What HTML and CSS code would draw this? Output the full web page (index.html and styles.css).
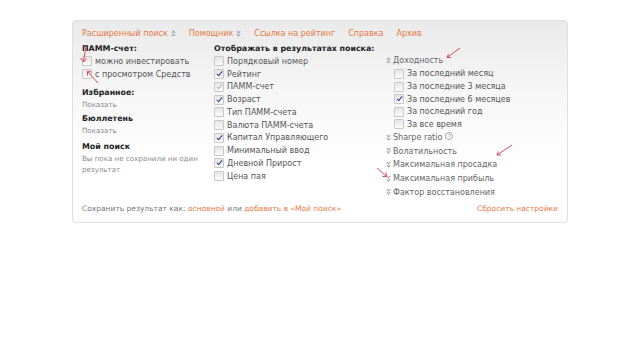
FILE: index.html
```html
<!DOCTYPE html>
<html lang="ru">
<head>
  <meta charset="UTF-8">
  <title>Расширенный поиск</title>
  <link rel="stylesheet" href="styles.css">
</head>
<body>
  <div id="panel">
    <div class="nav">
      <a href="#">Расширенный поиск<span class="chev up"></span></a>
      <a href="#">Помощник<span class="chev"></span></a>
      <a href="#">Ссылка на рейтинг</a>
      <a href="#">Справка</a>
      <a href="#">Архив</a>
    </div>

    <div class="cols">
      <div class="col col-left">
        <h4>ПАММ-счет:</h4>
        <label class="row"><span class="box"></span>можно инвестировать</label>
        <label class="row"><span class="box"></span>с просмотром Средств</label>

        <h4 class="gap">Избранное:</h4>
        <p class="muted">Показать</p>

        <h4 class="gap2">Бюллетень</h4>
        <p class="muted">Показать</p>

        <h4 class="gap3">Мой поиск</h4>
        <p class="muted note">Вы пока не сохранили ни один результат</p>
      </div>

      <div class="col col-mid">
        <h4>Отображать в результатах поиска:</h4>
        <label class="row"><span class="box"></span>Порядковый номер</label>
        <label class="row"><span class="box on"></span>Рейтинг</label>
        <label class="row"><span class="box on off"></span>ПАММ-счет</label>
        <label class="row"><span class="box on"></span>Возраст</label>
        <label class="row"><span class="box"></span>Тип ПАММ-счета</label>
        <label class="row"><span class="box"></span>Валюта ПАММ-счета</label>
        <label class="row"><span class="box on"></span>Капитал Управляющего</label>
        <label class="row"><span class="box"></span>Минимальный ввод</label>
        <label class="row"><span class="box on"></span>Дневной Прирост</label>
        <label class="row"><span class="box"></span>Цена пая</label>
      </div>

      <div class="col col-right">
        <div class="toggle"><span class="chev up"></span>Доходность</div>
        <div class="sub">
          <label class="row"><span class="box"></span>За последний месяц</label>
          <label class="row"><span class="box"></span>За последние 3 месяца</label>
          <label class="row"><span class="box on"></span>За последние 6 месяцев</label>
          <label class="row"><span class="box"></span>За последний год</label>
          <label class="row"><span class="box"></span>За все время</label>
        </div>
        <div class="toggle"><span class="chev"></span>Sharpe ratio<span class="help">?</span></div>
        <div class="toggle"><span class="chev"></span>Волатильность</div>
        <div class="toggle"><span class="chev"></span>Максимальная просадка</div>
        <div class="toggle"><span class="chev"></span>Максимальная прибыль</div>
        <div class="toggle"><span class="chev"></span>Фактор восстановления</div>
      </div>
    </div>

    <div class="footer">
      <div>Сохранить результат как: <a href="#">основной</a> или <a href="#">добавить в «Мой поиск»</a></div>
      <a href="#">Сбросить настройки</a>
    </div>

    <!-- red pen marks from the screenshot -->
    <svg class="marks" width="640" height="360" viewBox="0 0 640 360">
      <g fill="none" stroke="#d94a5c" stroke-width="1">
        <path d="M86 46 L83.5 62 M80.5 58 L83.5 62 L86.5 58.5"/>
        <path d="M98 83 L87.5 71.5 M87.5 75.5 L87.5 71.5 L91.5 72"/>
        <path d="M460 48 L447 57.5 M448.5 54 L447 57.5 L451 57.5"/>
        <path d="M512 145 L497 155 M498.5 151.5 L497 155 L501 155"/>
        <path d="M377 168 L386.5 176.5 M382.5 176.5 L386.5 176.5 L386 172.5"/>
      </g>
    </svg>
  </div>
</body>
</html>
```

FILE: styles.css
```css
body {
  margin: 0;
  background: #fff;
  font-family: 'DejaVu Sans', Verdana, sans-serif;
  font-size: 8px;
  color: #555;
}

a {
  color: #e8793f;
  text-decoration: none;
}

#panel {
  position: relative;
  margin: 20px 0 0 72px;
  width: 476px;
  padding: 6px 9px 7px 9px;
  border: 1px solid #e0e0e0;
  border-radius: 4px;
  background: linear-gradient(#eaeaea, #f6f6f6 35%, #fff 70%);
}

.nav {
  display: flex;
  gap: 0 13px;
  line-height: 13px;
  font-size: 8px;
}

.nav a {
  display: flex;
  align-items: center;
  gap: 3px;
}

/* small double chevron */
.chev {
  display: inline-block;
  position: relative;
  flex: none;
  width: 5px;
  height: 6px;
}

.chev::before,
.chev::after {
  content: '';
  position: absolute;
  left: 1px;
  width: 2px;
  height: 2px;
  border-right: 1px solid #999;
  border-bottom: 1px solid #999;
  transform: rotate(45deg);
}

.chev::before { top: -1px; }
.chev::after { top: 2px; }

.chev.up::before,
.chev.up::after {
  transform: rotate(-135deg);
}
.chev.up::before { top: 0; }
.chev.up::after { top: 3px; }

.cols {
  display: grid;
  grid-template-columns: 132px 172px 1fr;
  margin-top: 2px;
}

h4 {
  margin: 0;
  line-height: 13px;
  font-size: 7.9px;
  color: #222;
}

h4.gap { margin-top: 5px; }
h4.gap2 { margin-top: 2px; }
h4.gap3 { margin-top: 4px; }

.muted {
  margin: 0;
  font-size: 7.1px;
  line-height: 11px;
  color: #8a8a8a;
}

.note {
  width: 126px;
}

.row {
  display: flex;
  align-items: center;
  gap: 3px;
  height: 12.75px;
}

.box {
  position: relative;
  flex: none;
  width: 8px;
  height: 8px;
  border: 1px solid #c8c8c8;
  border-radius: 1px;
  background: linear-gradient(#e6e6e6, #fafafa);
}

.box.on::after {
  content: '';
  position: absolute;
  left: 2.5px;
  top: 0;
  width: 2px;
  height: 5px;
  border-right: 1.3px solid #2b3f8c;
  border-bottom: 1.3px solid #2b3f8c;
  transform: rotate(40deg);
}

.box.on.off::after {
  border-color: #b5b5b5;
}

.col-right {
  padding-top: 12px;
}

.toggle {
  display: flex;
  align-items: center;
  gap: 2px;
  height: 13.7px;
  color: #666;
}

.sub {
  padding-left: 8px;
}

.sub .row {
  height: 12.6px;
}

.help {
  display: inline-block;
  width: 6px;
  height: 6px;
  margin: -4px 0 0 1px;
  border: 1px solid #aaa;
  border-radius: 50%;
  font-size: 5px;
  line-height: 6px;
  text-align: center;
  color: #888;
}

.footer {
  display: flex;
  justify-content: space-between;
  margin-top: 3px;
  line-height: 13px;
  font-size: 7.5px;
  color: #777;
}

.marks {
  position: absolute;
  left: -73px;
  top: -21px;
  pointer-events: none;
}
```
